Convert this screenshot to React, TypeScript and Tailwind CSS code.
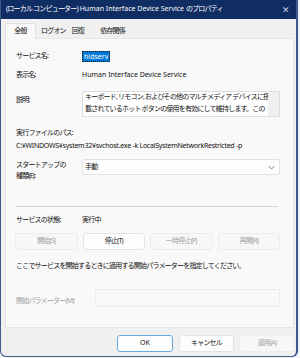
import React from 'react';

// japanese runs are squeezed a bit to get close to Yu Gothic UI widths
const J = ({ children }: { children: React.ReactNode }) => <span className="tracking-[-0.8px]">{children}</span>;

const Btn = ({ label, disabled, primary, className = '' }: { label: React.ReactNode; disabled?: boolean; primary?: boolean; className?: string }) => (
  <div
    className={`h-[17px] flex items-center justify-center rounded-[3px] border text-[7px] ${
      disabled
        ? 'bg-[#f7f7f7] border-[#ececec] text-[#a3a3a3]'
        : primary
        ? 'bg-[#fdfdfd] border-[#68a9e0] text-[#111]'
        : 'bg-[#fdfdfd] border-[#e3e3e3] text-[#111]'
    } ${className}`}
  >
    {label}
  </div>
);

export default function App() {
  return (
    <div className="w-[300px] h-[358px] bg-[#f3f3f3] text-[#111] text-[7px]" style={{ fontFamily: '"Noto Sans", "Noto Sans CJK JP", sans-serif' }}>
      <div className="w-[298px] h-[357px] flex flex-col border border-r-2 border-t-0 border-[#3b5a8e] rounded-b-[6px] bg-[#f0f0f0] overflow-hidden">
        {/* title bar */}
        <div className="h-[19px] shrink-0 bg-[#0f2c63] flex items-center pl-[5px] pr-[6px] text-white">
          <span className="flex-1 whitespace-nowrap">
            <J>(ローカル コンピューター)</J> Human Interface Device Service <J>のプロパティ</J>
          </span>
          <span className="text-[9px] text-[#c8d2e4] leading-none">✕</span>
        </div>

        {/* tabs */}
        <div className="flex items-end h-[19px] pl-[4px]">
          <div className="h-[16px] w-[31px] flex items-center justify-center bg-[#f9f9f9] border border-b-0 border-[#e0e0e0] rounded-t-[3px] -mb-px relative z-10">
            <J>全般</J>
          </div>
          <div className="h-[14px] ml-[5px] flex items-center"><J>ログオン</J></div>
          <div className="h-[14px] ml-[6px] flex items-center"><J>回復</J></div>
          <div className="h-[14px] ml-[16px] flex items-center"><J>依存関係</J></div>
        </div>

        {/* panel */}
        <div className="ml-[4px] mr-[2px] h-[290px] shrink-0 bg-[#f9f9f9] border border-[#e6e6e6] pl-[10px] pr-[13px] pt-[11px] flex flex-col">
          <div className="flex items-center h-[12px]">
            <span className="w-[66px]"><J>サービス名:</J></span>
            <span className="bg-[#0078d7] text-white px-[1px] leading-[9px] border border-dotted border-[#1b1b1b]">hidserv</span>
          </div>
          <div className="flex items-center h-[12px] mt-[7px]">
            <span className="w-[66px]"><J>表示名:</J></span>
            <span>Human Interface Device Service</span>
          </div>
          <div className="flex items-start mt-[10px]">
            <span className="w-[66px] h-[12px] mt-[3px] flex items-center"><J>説明:</J></span>
            <div className="flex-1 h-[26px] border border-[#dcdcdc] bg-white flex overflow-hidden">
              <div className="flex-1 pl-[2px] -mt-[1px] leading-[12px] whitespace-nowrap overflow-hidden">
                <J>キーボード, リモコン, およびその他のマルチメディア デバイスに搭</J>
                <br />
                <J>載されているホット ボタンの使用を有効にして維持します。この</J>
                <br />
                <J>サービスは実行したままにすることをお勧めします。</J>
              </div>
              <div className="w-[11px] shrink-0 bg-[#f0f0f0]" />
            </div>
          </div>
          <div className="mt-[10px] h-[12px] flex items-center"><J>実行ファイルのパス:</J></div>
          <div className="mt-[1px] h-[12px] flex items-center whitespace-nowrap tracking-[-0.25px]">
            C:¥WINDOWS¥system32¥svchost.exe -k LocalSystemNetworkRestricted -p
          </div>
          <div className="flex items-start mt-[7px] h-[22px]">
            <div className="w-[66px] leading-[11px]">
              <J>スタートアップの</J>
              <br />
              <J>種類(E):</J>
            </div>
            <div className="flex-1 h-[16px] border border-[#e3e3e3] bg-[#fdfdfd] rounded-[2px] flex items-center pl-[2px] pr-[4px]">
              <span className="flex-1"><J>手動</J></span>
              <svg width="7" height="5" viewBox="0 0 7 5" fill="none" stroke="#7a7a7a" strokeWidth="0.9">
                <path d="M0.5 1 L3.5 4 L6.5 1" />
              </svg>
            </div>
          </div>
          <div className="mt-[25px] h-px bg-[#d6d6d6] mr-[2px]" />
          <div className="flex items-center h-[12px] mt-[7px]">
            <span className="w-[66px]"><J>サービスの状態:</J></span>
            <span><J>実行中</J></span>
          </div>
          <div className="grid grid-cols-4 gap-[5px] mt-[7px] -ml-px">
            <Btn label={<J>開始(S)</J>} disabled />
            <Btn label={<J>停止(T)</J>} />
            <Btn label={<J>一時停止(P)</J>} disabled />
            <Btn label={<J>再開(R)</J>} disabled />
          </div>
          <div className="mt-[10px] h-[12px] flex items-center whitespace-nowrap">
            <J>ここでサービスを開始するときに適用する開始パラメーターを指定してください。</J>
          </div>
          <div className="flex items-end mt-[17px]">
            <span className="w-[79px] h-[12px] flex items-center text-[#a3a3a3]"><J>開始パラメーター(M):</J></span>
            <div className="flex-1 h-[18px] border border-[#ececec] bg-[#f9f9f9] rounded-[2px]" />
          </div>
        </div>

        {/* footer */}
        <div className="flex justify-end pr-[1px] mt-[7px]">
          <Btn label="OK" primary className="w-[56px]" />
          <Btn label={<J>キャンセル</J>} className="w-[55px] ml-[6px]" />
          <Btn label={<J>適用(A)</J>} disabled className="w-[56px] ml-[5px]" />
        </div>
      </div>
    </div>
  );
}
